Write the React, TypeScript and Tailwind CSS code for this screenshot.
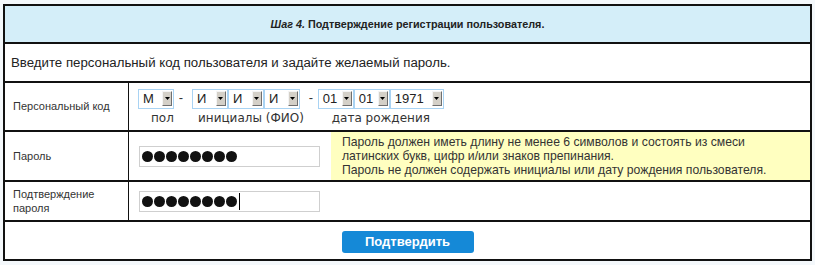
const sans = { fontFamily: '"Liberation Sans", Arial, sans-serif' };
const deja = { fontFamily: '"DejaVu Sans", sans-serif' };

function Select({ value, w }: { value: string; w: string }) {
  return (
    <div className={`flex h-[20px] ${w} items-center justify-between border border-[#a9d3f3] bg-white pl-[4px] pr-[1px] text-[13px] leading-none text-[#222]`}>
      <span>{value}</span>
      <span className="flex h-[15px] w-[10px] items-center justify-center border-t border-l border-r border-b border-t-[#f4f4f4] border-l-[#f4f4f4] border-r-[#6f6f6f] border-b-[#6f6f6f] bg-[#d4d0c8]">
        <svg width="5" height="3" viewBox="0 0 5 3">
          <path d="M0 0h5L2.5 3z" fill="#000" />
        </svg>
      </span>
    </div>
  );
}

function Dots({ caret }: { caret?: boolean }) {
  return (
    <div className="flex h-[21px] w-[181px] items-center gap-px border border-[#cfcfcf] bg-white pl-[2px]">
      {Array.from({ length: 8 }).map((_, i) => (
        <span key={i} className="h-[11px] w-[11px] rounded-full bg-[#111]" />
      ))}
      {caret && <span className="ml-px h-[17px] w-px bg-black" />}
    </div>
  );
}

export default function App() {
  return (
    <div className="h-[265px] w-[815px] bg-[#f4f8fb] pt-[4px] pl-[3px]" style={sans}>
      <div className="w-[809px] border-2 border-[#111] bg-white text-[#222]">
        {/* Заголовок */}
        <div className="flex h-[38px] items-center justify-center border-b-2 border-[#111] bg-[#d4eef9] text-[10.8px] font-bold">
          <span>
            <i>Шаг 4.</i> Подтверждение регистрации пользователя.
          </span>
        </div>

        <div className="flex h-[39px] items-center border-b-2 border-[#111] pl-[6px] text-[13.25px]">
          Введите персональный код пользователя и задайте желаемый пароль.
        </div>

        {/* Персональный код */}
        <div className="flex h-[49px] border-b-2 border-[#111]">
          <div className="flex w-[124px] items-center border-r border-[#111] pl-[8px] text-[11px] text-[#333]">
            Персональный код
          </div>
          <div className="flex items-center pl-[9px]">
            <div className="flex text-[13px] leading-[14px] text-[#333]">
              <div className="flex flex-col">
                <Select value="М" w="w-[36px]" />
                <span className="pl-[13px] pt-[2px] text-[12px]" style={deja}>пол</span>
              </div>
              <span className="mt-[2px] w-[14px] text-center">-</span>
              <div className="flex flex-col items-center">
                <div className="flex">
                  <Select value="И" w="w-[36px]" />
                  <Select value="И" w="w-[36px]" />
                  <Select value="И" w="w-[36px]" />
                </div>
                <span className="pl-[10px] pt-[2px] text-[12px] whitespace-nowrap" style={deja}>
                  инициалы (ФИО)
                </span>
              </div>
              <span className="mt-[2px] w-[14px] text-center">-</span>
              <div className="flex flex-col items-center">
                <div className="flex">
                  <Select value="01" w="w-[36px]" />
                  <Select value="01" w="w-[36px]" />
                  <Select value="1971" w="w-[54px]" />
                </div>
                <span className="pt-[2px] text-[12px] whitespace-nowrap" style={deja}>
                  дата рождения
                </span>
              </div>
            </div>
          </div>
        </div>

        {/* Пароль */}
        <div className="flex h-[50px] border-b-2 border-[#111]">
          <div className="flex w-[124px] items-center border-r border-[#111] pl-[8px] text-[11px] text-[#333]">
            Пароль
          </div>
          <div className="flex flex-1">
            <div className="flex w-[202px] items-center pl-[10px]">
              <Dots />
            </div>
            <div className="flex-1 bg-[#ffffc0] pt-[3px] pl-[11px] text-[12.2px] leading-[14px] text-[#333]">
              Пароль должен иметь длину не менее 6 символов и состоять из смеси
              <br />
              латинских букв, цифр и/или знаков препинания.
              <br />
              Пароль не должен содержать инициалы или дату рождения пользователя.
            </div>
          </div>
        </div>

        {/* Подтверждение пароля */}
        <div className="flex h-[40px] border-b-2 border-[#111]">
          <div className="flex w-[124px] items-center border-r border-[#111] pl-[8px] text-[11px] leading-[14px] text-[#333]">
            Подтверждение
            <br />
            пароля
          </div>
          <div className="flex items-center pl-[10px]">
            <Dots caret />
          </div>
        </div>

        <div className="flex h-[37px] items-center justify-center">
          <button className="mt-[2px] h-[22px] w-[132px] rounded-[3px] bg-[#1589d7] text-[13px] font-bold text-white">
            Подтвердить
          </button>
        </div>
      </div>
    </div>
  );
}
